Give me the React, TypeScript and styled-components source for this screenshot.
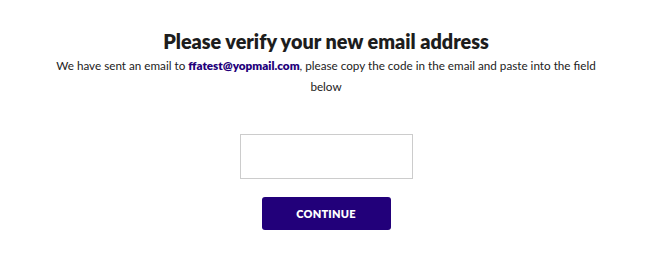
import React from "react";
import styled, { createGlobalStyle } from "styled-components";

const Global = createGlobalStyle`
  html, body { margin: 0; padding: 0; background: #fff; }
  body { font-family: Lato, "Noto Sans", sans-serif; color: #1f1f1f; }
`;

const Page = styled.div`
  display: flex;
  flex-direction: column;
  align-items: center;
  padding-top: 28px;
  padding-right: 3px;
`;

const Title = styled.h1`
  margin: 0;
  font-size: 19.8px;
  font-weight: 800;
  line-height: 26px;
  color: #1d1d1d;
`;

const Sub = styled.p`
  margin: 1px 0 0;
  width: 560px;
  text-align: center;
  font-size: 11.7px;
  line-height: 21px;
  color: #222;
`;

const Email = styled.strong`
  color: #22007a;
  font-weight: 800;
`;

const Code = styled.input`
  margin-top: 37px;
  width: 173px;
  height: 45px;
  box-sizing: border-box;
  border: 1px solid #cccccc;
  outline: none;
`;

const Button = styled.button`
  margin-top: 18px;
  width: 129px;
  height: 33px;
  border: none;
  border-radius: 3px;
  background: #22007a;
  color: #fff;
  font-family: Lato, "Noto Sans", sans-serif;
  font-weight: 800;
  font-size: 11px;
  letter-spacing: 0.2px;
`;

export default function App() {
  return (
    <>
      <Global />
      <Page>
        <Title>Please verify your new email address</Title>
        <Sub>
          We have sent an email to <Email>ffatest@yopmail.com</Email>, please copy the code in the email and paste into the field below
        </Sub>
        <Code type="text" />
        <Button>CONTINUE</Button>
      </Page>
    </>
  );
}
